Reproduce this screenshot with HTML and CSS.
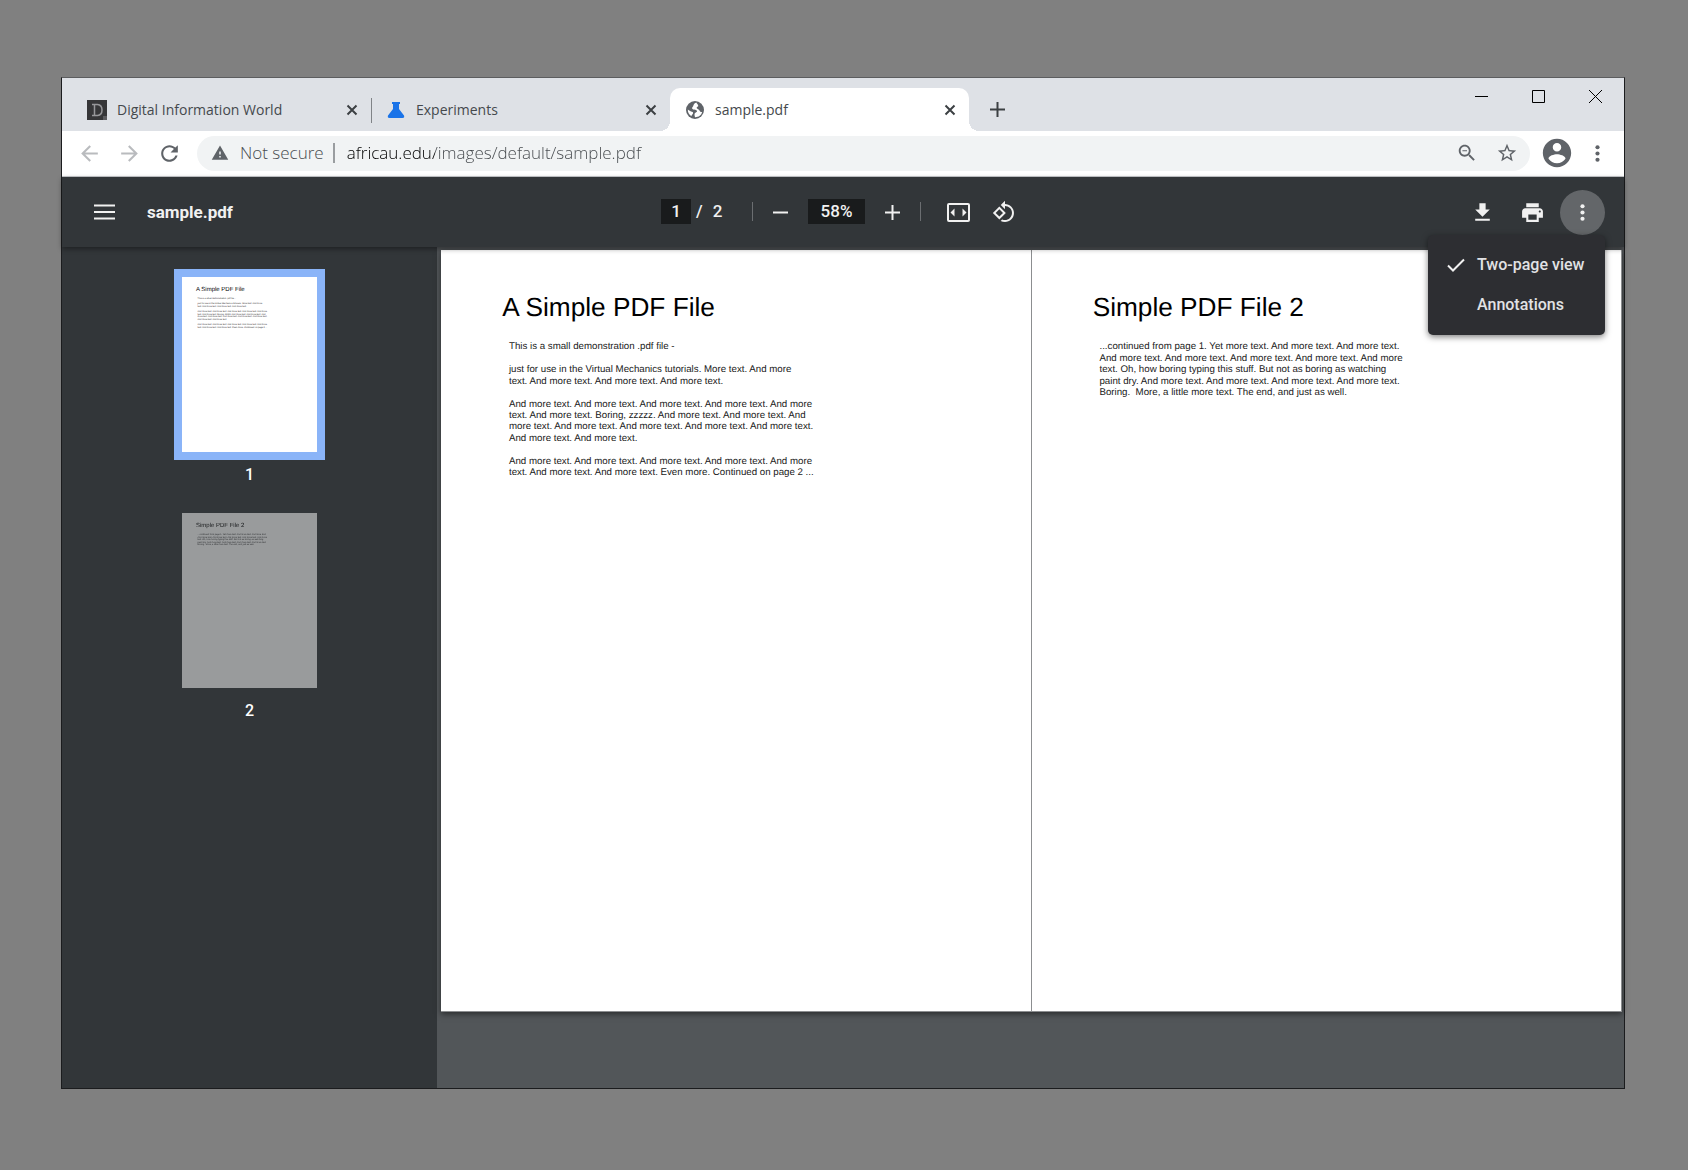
FILE: index.html
```html
<!DOCTYPE html>
<html lang="en">
<head>
<meta charset="utf-8">
<meta name="viewport" content="width=device-width, initial-scale=1">
<title>sample.pdf</title>
<link rel="stylesheet" href="styles.css">
</head>
<body>
<div class="window">
  <header class="tabstrip">
    <nav class="tabs" aria-label="Tabs">
      <div class="tab tab-divided">
        <svg class="favicon" viewBox="0 0 20 20" aria-hidden="true"><rect width="20" height="20" fill="#363638"/><rect x="16" y="16" width="4" height="4" fill="#5c5c5f"/><path d="M5 4.500h5.500q4.500.5 4.500 5.500t-4.500 5.500H5M7.500 4.500v11" fill="none" stroke="#97979a" stroke-width="1.500"/></svg>
        <a class="tab-title" href="#diw">Digital Information World</a>
        <button class="tab-close" type="button" aria-label="Close tab"><svg viewBox="0 0 12 12"><path d="M1.500 1.500l9 9M10.500 1.500l-9 9"/></svg></button>
      </div>
      <div class="tab">
        <svg class="favicon" viewBox="0 0 20 20" aria-hidden="true"><path d="M6 2h8v2h-1v5l5 6.500q.8 2.500-1.500 2.500h-13Q1.200 18 2 15.500L7 9V4H6z" fill="#1a73e8"/></svg>
        <a class="tab-title" href="#experiments">Experiments</a>
        <button class="tab-close" type="button" aria-label="Close tab"><svg viewBox="0 0 12 12"><path d="M1.500 1.500l9 9M10.500 1.500l-9 9"/></svg></button>
      </div>
      <div class="tab tab-active">
        <svg class="favicon" viewBox="0 0 20 20" aria-hidden="true"><circle cx="10" cy="10" r="9" fill="#5f6368"/><path d="M11 2.800C8.500 3.300 8.800 5.500 8 6.500S6.500 8 7.500 9s2.500.5 3.500 1 1.500 1.200.5 2-2 1-2 2.500.5 2 .5 2.700c3.500.1 6.500-2 7.100-5.200-1 .2-2-.2-2.300-1S14 9.500 12.800 9s-1.600-1.500-.6-2 1.300-1 .8-2-1.200-1.500-2-2.700zM2.800 9.500c.9.300 2 1.700 3.200 2s2.500.5 2 2-1.500 1-1.500 2.700C4.200 15 2.700 12.500 2.800 9.500z" fill="#fff"/></svg>
        <a class="tab-title" href="#sample" aria-current="page">sample.pdf</a>
        <button class="tab-close" type="button" aria-label="Close tab"><svg viewBox="0 0 12 12"><path d="M1.500 1.500l9 9M10.500 1.500l-9 9"/></svg></button>
      </div>
      <button class="new-tab" type="button" aria-label="New tab"><svg viewBox="0 0 15 15"><path d="M7.500 0v15M0 7.500h15"/></svg></button>
    </nav>
    <div class="window-controls">
      <button type="button" aria-label="Minimize"><svg viewBox="0 0 13 13"><path d="M0 6.500h13"/></svg></button>
      <button type="button" aria-label="Maximize"><svg viewBox="0 0 13 13"><path d="M.5.5h12v12H.5z"/></svg></button>
      <button type="button" aria-label="Close"><svg viewBox="0 0 13 13"><path d="M0 0l13 13M13 0L0 13"/></svg></button>
    </div>
  </header>

  <div class="navbar">
    <button class="nav-btn nav-off" type="button" aria-label="Back"><svg class="i25" viewBox="0 0 24 24"><path d="M20 11H7.830l5.590-5.590L12 4l-8 8 8 8 1.410-1.410L7.830 13H20v-2z"/></svg></button>
    <button class="nav-btn nav-off" type="button" aria-label="Forward"><svg class="i25" viewBox="0 0 24 24"><path d="M12 4l-1.410 1.410L16.170 11H4v2h12.170l-5.580 5.590L12 20l8-8z"/></svg></button>
    <button class="nav-btn" type="button" aria-label="Reload"><svg class="i25" viewBox="0 0 24 24"><path d="M17.650 6.350C16.200 4.900 14.210 4 12 4c-4.420 0-7.990 3.580-7.990 8s3.570 8 7.990 8c3.730 0 6.840-2.550 7.730-6h-2.080c-.82 2.330-3.040 4-5.650 4-3.310 0-6-2.690-6-6s2.690-6 6-6c1.660 0 3.140.69 4.220 1.780L13 11h7V4l-2.350 2.350z"/></svg></button>
    <form class="omnibox">
      <svg class="i18" viewBox="0 0 24 24" aria-hidden="true"><path d="M1 21h22L12 2 1 21zm12-3h-2v-2h2v2zm0-4h-2v-4h2v4z"/></svg>
      <label class="security" for="url">Not secure</label>
      <input class="url" id="url" type="text" value="africau.edu/images/default/sample.pdf">
      <button class="nav-btn" type="button" aria-label="Zoom"><svg class="i22" viewBox="0 0 24 24"><path d="M15.500 14h-.79l-.28-.27C15.410 12.590 16 11.110 16 9.500 16 5.910 13.090 3 9.500 3S3 5.910 3 9.500 5.910 16 9.500 16c1.610 0 3.090-.59 4.230-1.570l.27.28v.79l5 4.990L20.490 19l-4.990-5zm-6 0C7.010 14 5 11.990 5 9.500S7.010 5 9.500 5 14 7.010 14 9.500 11.990 14 9.500 14zM7 9h5v1H7z"/></svg></button>
      <button class="nav-btn" type="button" aria-label="Bookmark"><svg class="i22" viewBox="0 0 24 24"><path d="M22 9.240l-7.190-.62L12 2 9.190 8.630 2 9.240l5.460 4.730L5.820 21 12 17.270 18.180 21l-1.630-7.030L22 9.240zM12 15.400l-3.760 2.270 1-4.280-3.320-2.880 4.380-.38L12 6.100l1.710 4.040 4.380.38-3.320 2.880 1 4.280L12 15.400z"/></svg></button>
    </form>
    <button class="nav-btn" type="button" aria-label="Profile"><svg class="i34" viewBox="0 0 24 24"><path d="M12 2C6.480 2 2 6.480 2 12s4.480 10 10 10 10-4.480 10-10S17.520 2 12 2zm0 3c1.660 0 3 1.340 3 3s-1.340 3-3 3-3-1.340-3-3 1.340-3 3-3zm0 14.200c-2.500 0-4.710-1.280-6-3.220.03-1.990 4-3.080 6-3.080 1.990 0 5.970 1.090 6 3.080-1.290 1.940-3.500 3.220-6 3.220z"/></svg></button>
    <button class="nav-btn" type="button" aria-label="Browser menu"><svg class="i25" viewBox="0 0 24 24"><circle cx="12" cy="6" r="2"/><circle cx="12" cy="12" r="2"/><circle cx="12" cy="18" r="2"/></svg></button>
  </div>

  <div class="pdf-toolbar">
    <div class="pdf-start">
      <button class="pdf-btn" type="button" aria-label="Menu"><svg class="burger" viewBox="0 0 21 16"><path d="M0 1.500h21M0 8h21M0 14.500h21"/></svg></button>
      <h1 class="pdf-title">sample.pdf</h1>
    </div>
    <div class="pdf-center">
      <input class="field page-field" type="text" value="1" aria-label="Page number">
      <span class="page-count"><span>/</span><span>2</span></span>
      <span class="rule"></span>
      <button class="pdf-btn" type="button" aria-label="Zoom out"><svg class="i15" viewBox="0 0 15 15"><path d="M0 6.500h15v2H0z"/></svg></button>
      <input class="field zoom-field" type="text" value="58%" aria-label="Zoom level">
      <button class="pdf-btn" type="button" aria-label="Zoom in"><svg class="i15" viewBox="0 0 15 15"><path d="M6.500 0h2v6.500H15v2H8.500V15h-2V8.500H0v-2h6.500z"/></svg></button>
      <span class="rule rule-wide"></span>
      <button class="pdf-btn" type="button" aria-label="Fit to width"><svg class="fit" viewBox="0 0 23 19"><path d="M2 0h19q2 0 2 2v15q0 2-2 2H2q-2 0-2-2V2Q0 0 2 0zm0 2v15h19V2zM7.500 5.500v8l-4-4zM15.500 5.500l4 4-4 4z" fill-rule="evenodd"/></svg></button>
      <button class="pdf-btn" type="button" aria-label="Rotate"><svg class="i24" viewBox="0 0 24 24"><path d="M7.340 6.410L.86 12.900l6.490 6.480 6.490-6.480-6.500-6.490zM3.690 12.900l3.660-3.660L11 12.900l-3.660 3.660-3.650-3.660zm15.670-6.260C17.610 4.880 15.300 4 13 4V.76L8.760 5 13 9.240V6c1.790 0 3.580.68 4.950 2.050 2.730 2.730 2.730 7.170 0 9.900C16.580 19.320 14.790 20 13 20c-.97 0-1.940-.21-2.840-.61l-1.490 1.490C10.020 21.620 11.510 22 13 22c2.300 0 4.610-.88 6.360-2.640 3.520-3.510 3.520-9.210 0-12.720z"/></svg></button>
    </div>
    <div class="pdf-end">
      <button class="pdf-btn" type="button" aria-label="Download"><svg class="i25" viewBox="0 0 24 24"><path d="M19 9h-4V3H9v6H5l7 7 7-7zM5 18v2h14v-2H5z"/></svg></button>
      <button class="pdf-btn" type="button" aria-label="Print"><svg class="i25" viewBox="0 0 24 24"><path d="M19 8H5c-1.660 0-3 1.340-3 3v6h4v4h12v-4h4v-6c0-1.660-1.340-3-3-3zm-3 11H8v-5h8v5zm3-7c-.55 0-1-.45-1-1s.45-1 1-1 1 .45 1 1-.45 1-1 1zm-1-9H6v4h12V3z"/></svg></button>
      <div class="more">
        <button class="pdf-btn pdf-btn-on" type="button" aria-label="More actions" aria-expanded="true"><svg class="i25" viewBox="0 0 24 24"><circle cx="12" cy="6" r="2"/><circle cx="12" cy="12" r="2"/><circle cx="12" cy="18" r="2"/></svg></button>
        <div class="menu" role="menu">
          <button class="menu-item" type="button" role="menuitemcheckbox" aria-checked="true"><svg class="check" viewBox="0 0 18 14" aria-hidden="true"><path d="M1 7.500L6 12.500 17 1.500"/></svg>Two-page view</button>
          <button class="menu-item" type="button" role="menuitemcheckbox" aria-checked="false">Annotations</button>
        </div>
      </div>
    </div>
  </div>

  <div class="pdf-body">
    <aside class="thumbs">
      <a class="thumb thumb-current" href="#page1">
        <div class="sheet thumb-sheet" aria-hidden="true">
          <div class="sheet-text">
            <div class="sheet-title">A Simple PDF File</div>
            <p>This is a small demonstration .pdf file -</p>
            <p>just for use in the Virtual Mechanics tutorials. More text. And more<br>text. And more text. And more text. And more text.</p>
            <p>And more text. And more text. And more text. And more text. And more<br>text. And more text. Boring, zzzzz. And more text. And more text. And<br>more text. And more text. And more text. And more text. And more text.<br>And more text. And more text.</p>
            <p>And more text. And more text. And more text. And more text. And more<br>text. And more text. And more text. Even more. Continued on page 2 ...</p>
          </div>
        </div>
        <span class="thumb-label">1</span>
      </a>
      <a class="thumb" href="#page2">
        <div class="sheet thumb-sheet" aria-hidden="true">
          <div class="sheet-text">
            <div class="sheet-title">Simple PDF File 2</div>
            <p>...continued from page 1. Yet more text. And more text. And more text.<br>And more text. And more text. And more text. And more text. And more<br>text. Oh, how boring typing this stuff. But not as boring as watching<br>paint dry. And more text. And more text. And more text. And more text.<br>Boring.&nbsp; More, a little more text. The end, and just as well.</p>
          </div>
        </div>
        <span class="thumb-label">2</span>
      </a>
    </aside>
    <main class="viewer">
      <div class="spread">
        <article class="sheet page" id="page1">
          <div class="sheet-text">
            <h2 class="sheet-title">A Simple PDF File</h2>
            <p>This is a small demonstration .pdf file -</p>
            <p>just for use in the Virtual Mechanics tutorials. More text. And more<br>text. And more text. And more text. And more text.</p>
            <p>And more text. And more text. And more text. And more text. And more<br>text. And more text. Boring, zzzzz. And more text. And more text. And<br>more text. And more text. And more text. And more text. And more text.<br>And more text. And more text.</p>
            <p>And more text. And more text. And more text. And more text. And more<br>text. And more text. And more text. Even more. Continued on page 2 ...</p>
          </div>
        </article>
        <article class="sheet page" id="page2">
          <div class="sheet-text">
            <h2 class="sheet-title">Simple PDF File 2</h2>
            <p>...continued from page 1. Yet more text. And more text. And more text.<br>And more text. And more text. And more text. And more text. And more<br>text. Oh, how boring typing this stuff. But not as boring as watching<br>paint dry. And more text. And more text. And more text. And more text.<br>Boring.&nbsp; More, a little more text. The end, and just as well.</p>
          </div>
        </article>
      </div>
    </main>
  </div>
</div>
</body>
</html>
```
FILE: styles.css
```css
* { box-sizing: border-box; }

body {
  display: flex;
  min-height: 100vh;
  margin: 0;
  padding: 77px 63px 81px 61px;
  background: #808080;
  font-family: "Open Sans", sans-serif;
}

button {
  display: flex;
  align-items: center;
  justify-content: center;
  margin: 0;
  padding: 0;
  border: 0;
  background: none;
  color: inherit;
  font: inherit;
}

a { color: inherit; text-decoration: none; }
svg { display: block; flex: none; fill: currentColor; }

.i15 { width: 15px; height: 15px; }
.i18 { width: 18px; height: 18px; }
.i22 { width: 22px; height: 22px; }
.i24 { width: 24px; height: 24px; }
.i25 { width: 25px; height: 25px; }
.i34 { width: 34px; height: 34px; }

.window {
  display: flex;
  flex: 1;
  flex-direction: column;
  min-width: 0;
  border: 1px solid #1b1c1e;
  border-top-color: #5c5d5f;
}

/* Tab strip */
.tabstrip {
  display: flex;
  justify-content: space-between;
  height: 53px;
  padding-left: 10px;
  background: #dee1e6;
}
.tabs { display: flex; align-items: flex-end; }
.tab {
  position: relative;
  display: flex;
  align-items: center;
  gap: 10px;
  width: 299px;
  height: 43px;
  padding: 0 13px 0 15px;
}
.tab-divided::after {
  content: "";
  position: absolute;
  top: 10px;
  right: -1px;
  width: 1px;
  height: 25px;
  background: #808387;
}
.tab-active { border-radius: 10px 10px 0 0; background: #fff; }
.tab-active::before,
.tab-active::after {
  content: "";
  position: absolute;
  bottom: 0;
  width: 10px;
  height: 10px;
}
.tab-active::before { right: 100%; background: radial-gradient(circle at 0 0, transparent 10px, #fff 10px); }
.tab-active::after { left: 100%; background: radial-gradient(circle at 100% 0, transparent 10px, #fff 10px); }
.favicon { width: 20px; height: 20px; }
.tab-title {
  flex: 1;
  color: #45494d;
  font-size: 14px;
  line-height: 20px;
  white-space: nowrap;
}
.tab-close { width: 12px; height: 12px; }
.tab-close svg { width: 12px; height: 12px; stroke: #3c4043; stroke-width: 2; }
.new-tab { width: 56px; height: 43px; }
.new-tab svg { width: 15px; height: 15px; stroke: #3c4043; stroke-width: 2; }
.window-controls { display: flex; height: 37px; }
.window-controls button { width: 57px; }
.window-controls svg { width: 13px; height: 13px; fill: none; stroke: #000; stroke-width: 1; }

/* Address bar */
.navbar {
  display: flex;
  align-items: center;
  height: 46px;
  padding: 0 7px 1px;
  border-bottom: 1px solid #c8cacd;
  background: #fff;
  color: #5f6368;
}
.nav-btn { width: 40px; height: 35px; }
.nav-off { color: #b9bbbe; }
.omnibox {
  display: flex;
  flex: 1;
  align-items: center;
  height: 35px;
  margin: 0 7px 0 8px;
  padding: 0 3px 0 14px;
  border-radius: 18px;
  background: #f1f3f4;
  font-size: 17px;
  font-weight: 300;
  line-height: 20px;
}
.security {
  margin: 0 12px 0 11px;
  padding-right: 9px;
  border-right: 2px solid #9a9da0;
  color: #484c50;
}
.url {
  flex: 1;
  min-width: 0;
  padding: 0;
  border: 0;
  outline: 0;
  background: linear-gradient(90deg, #000 88px, #44484c 88px);
  background-clip: text;
  -webkit-background-clip: text;
  color: transparent;
  font: inherit;
}

/* PDF toolbar */
.pdf-toolbar {
  position: relative;
  z-index: 1;
  display: grid;
  grid-template-columns: 1fr auto 1fr;
  align-items: center;
  height: 70px;
  padding: 0 19px 0 20px;
  background: #323639;
  box-shadow: 0 2px 5px rgba(0, 0, 0, .4);
  color: #f1f1f1;
  font: 500 17px/24px Roboto, sans-serif;
}
.pdf-start, .pdf-center, .pdf-end { display: flex; align-items: center; }
.pdf-start { gap: 20px; }
.pdf-end { gap: 5px; justify-content: flex-end; }
.pdf-btn { width: 45px; height: 45px; border-radius: 50%; }
.pdf-btn-on { background: #636669; }
.pdf-title { margin: 0; font-size: 17px; font-weight: 700; }
.burger { width: 21px; height: 16px; stroke: #f1f1f1; stroke-width: 2; }
.fit { width: 23px; height: 19px; }
.field {
  height: 25px;
  margin-bottom: 2px;
  padding: 0;
  border: 0;
  outline: 0;
  background: #191b1c;
  color: inherit;
  font: inherit;
  text-align: center;
}
.page-field { width: 30px; }
.zoom-field { width: 57px; margin: 0 5px 2px; }
.page-count { display: flex; gap: 10px; width: 61px; margin-bottom: 2px; padding-left: 5px; }
.rule { width: 1px; height: 19px; margin: 0 5px 1px 0; background: #6b6e71; }
.rule-wide { margin: 0 15px 1px 5px; }
.more { position: relative; }
.menu {
  position: absolute;
  top: 100%;
  right: 0;
  width: 177px;
  padding: 10px 0;
  border-radius: 5px;
  background: #2d2e32;
  box-shadow: 0 2px 6px rgba(0, 0, 0, .5);
}
.menu-item {
  justify-content: flex-start;
  gap: 12px;
  width: 100%;
  height: 40px;
  padding-left: 19px;
  color: #e1e2e4;
  font-size: 16px;
}
.menu-item[aria-checked="false"] { padding-left: 49px; }
.check { width: 18px; height: 14px; fill: none; stroke: #f1f1f1; stroke-width: 2; }

/* Document area */
.pdf-body { display: flex; flex: 1; }
.thumbs {
  flex: none;
  width: 375px;
  padding-top: 30px;
  background: #323639;
}
.thumb { display: block; width: 135px; margin: 0 auto 28px; }
.thumb-label {
  display: block;
  margin-top: 13px;
  color: #fff;
  font: 500 16px/20px Roboto, sans-serif;
  text-align: center;
}
.viewer {
  flex: 1;
  min-width: 0;
  padding: 3px 2px 0 4px;
  background: #525659;
}
.spread { display: flex; box-shadow: 0 2px 6px rgba(0, 0, 0, .5); }

/* A sheet sizes its type from its own width, so pages and thumbnails share one layout. */
.sheet {
  container-type: inline-size;
  background: #fff;
  color: #000;
}
.thumb-sheet { aspect-ratio: 135 / 175; opacity: .5; }
.thumb-current .thumb-sheet { opacity: 1; box-shadow: 0 0 0 8px #8ab4f8; }
.page {
  flex: 1;
  aspect-ratio: 590 / 761;
  border: solid #8c8e90;
  border-width: 0 1px 1px 0;
}
.sheet-text {
  --pt: calc(100cqw / 607);
  padding: calc(44 * var(--pt)) 0 0 calc(70 * var(--pt));
  font-family: "Liberation Sans", Arial, sans-serif;
  font-size: calc(10 * var(--pt));
  line-height: 1.18;
  text-rendering: geometricPrecision;
  white-space: nowrap;
}
.sheet-title {
  margin: 0 0 calc(20 * var(--pt)) calc(-7 * var(--pt));
  font-size: calc(27 * var(--pt));
  font-weight: 400;
  line-height: calc(30 * var(--pt));
}
.sheet-text p { margin: 0 0 1.18em; color: #1a1a1a; }
```
